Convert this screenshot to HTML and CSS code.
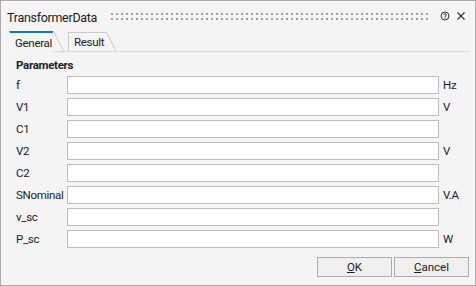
FILE: index.html
```html
<!DOCTYPE html>
<html lang="en">
  <head>
    <meta charset="utf-8" />
    <meta name="viewport" content="width=device-width, initial-scale=1" />
    <title>TransformerData</title>
    <link rel="stylesheet" href="styles.css">
  </head>
  <body>
    <div class="window">
      <div class="titlebar">
        <span class="title">TransformerData</span>
        <div class="grip"></div>
        <svg class="help" width="10" height="10" viewBox="0 0 10 10">
          <circle cx="5" cy="5" r="4" fill="none" stroke="#333" stroke-width="1"/>
          <path d="M3.6 4 Q3.6 2.8 5 2.8 Q6.4 2.8 6.4 3.9 Q6.4 4.6 5 5.2 L5 5.9" fill="none" stroke="#333" stroke-width="0.9"/>
          <rect x="4.5" y="6.6" width="1" height="1" fill="#333"/>
        </svg>
        <svg class="close" width="10" height="10" viewBox="0 0 10 10">
          <path d="M1.5 1.5 L8.5 8.5 M8.5 1.5 L1.5 8.5" stroke="#333" stroke-width="1.1"/>
        </svg>
      </div>

      <div class="tabs">
        <div class="tab active">General</div>
        <div class="tab">Result</div>
      </div>

      <div class="panel">
        <div class="group-title">Parameters</div>
        <div class="fields">
          <label>f</label><input /><span>Hz</span>
          <label>V1</label><input /><span>V</span>
          <label>C1</label><input /><span></span>
          <label>V2</label><input /><span>V</span>
          <label>C2</label><input /><span></span>
          <label>SNominal</label><input /><span>V.A</span>
          <label>v_sc</label><input /><span></span>
          <label>P_sc</label><input /><span>W</span>
        </div>
      </div>

      <div class="buttons">
        <button><u>O</u>K</button>
        <button><u>C</u>ancel</button>
      </div>
    </div>
  </body>
</html>
```

FILE: styles.css
```css
body {
    margin: 0;
    font-family: Roboto, "Liberation Sans", sans-serif;
    font-size: 11.5px;
    letter-spacing: -0.3px;
    color: #1c1c24;
}
.window {
    box-sizing: border-box;
    width: 476px;
    height: 286px;
    border: 1px solid #acacac;
    background: #f4f4f4;
}
.titlebar {
    display: flex;
    align-items: center;
    height: 30px;
    padding-left: 6px;
}
.title {
    font-size: 12.5px;
    margin-top: 3px;
}
.grip {
    flex: 1;
    height: 7px;
    margin: 0 11px 0 14px;
    background-image:
        linear-gradient(90deg, transparent 2px, #f4f4f4 2px),
        linear-gradient(#a2a2a2 2px, transparent 2px);
    background-size: 5px 5px;
}
.help {
    margin-right: 6px;
}
.close {
    margin-right: 9px;
}
.tabs {
    display: flex;
    align-items: flex-end;
    height: 20px;
    margin: 0 5px 0 6px;
    padding-left: 2px;
    border-bottom: 1px solid #dadada;
}
.tab {
    position: relative;
    box-sizing: border-box;
    height: 19px;
    width: 38px;
    margin-right: 15px;
    padding: 2px 0 0 5px;
    border-top: 1px solid #c9c9c9;
    border-left: 1px solid #c9c9c9;
}
.tab::after {
    content: '';
    position: absolute;
    top: -1px;
    right: -1px;
    bottom: 0;
    border-right: 1px solid #c9c9c9;
    transform: skewX(26deg);
    transform-origin: top left;
}
.tab.active {
    height: 21px;
    width: 44px;
    margin-bottom: -1px;
    padding-top: 3px;
    border-top: 2px solid #1a78b4;
    border-left-color: #ffffff;
    background: #f4f4f4;
}
.tab.active::after {
    top: -2px;
    bottom: 0;
    border-right-color: #c9c9c9;
}
.panel {
    padding-left: 15px;
}
.group-title {
    font-weight: bold;
    line-height: 16px;
    margin-top: 5px;
}
.fields {
    display: grid;
    grid-template-columns: 47px 372px auto;
    grid-auto-rows: 18px;
    column-gap: 4px;
    row-gap: 4px;
    margin-top: 3px;
    align-items: center;
}
.fields input {
    box-sizing: border-box;
    width: 372px;
    height: 18px;
    margin: 0;
    border: 1px solid #bdbdbd;
    background: #ffffff;
    font: inherit;
}
.buttons {
    display: flex;
    justify-content: flex-end;
    gap: 2px;
    margin-top: 9px;
    padding-right: 6px;
}
.buttons button {
    box-sizing: border-box;
    width: 75px;
    height: 20px;
    padding: 0;
    border: 1px solid #adadad;
    background: #efefef;
    font: inherit;
    color: #1c1c24;
}
```
